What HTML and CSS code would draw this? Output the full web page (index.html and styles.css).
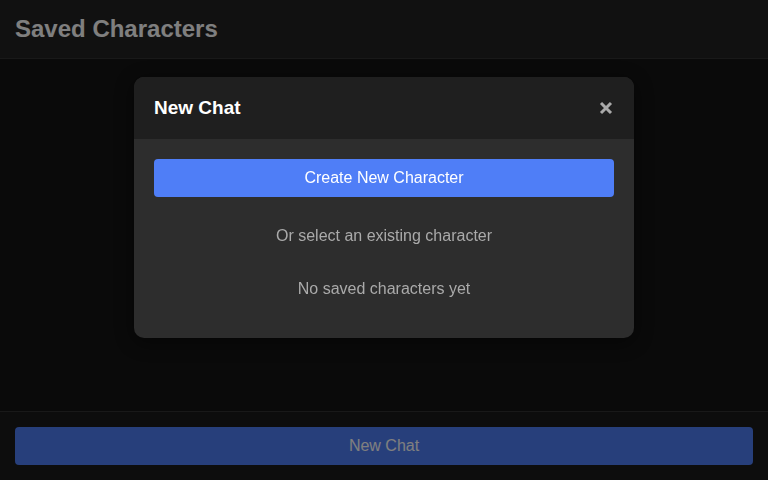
FILE: index.html
```html
<!DOCTYPE html>
<html>
<head>
<meta charset="utf-8">
<link rel="stylesheet" href="styles.css">
</head>
<body>
<div class="app">
  <header class="top">
    <h1 class="title">Saved Characters</h1>
  </header>
  <main class="main"></main>
  <footer class="bottom">
    <button class="btn-primary wide">New Chat</button>
  </footer>
</div>
<div class="overlay">
  <div class="modal">
    <div class="modal-head">
      <h2 class="modal-title">New Chat</h2>
      <svg class="close" width="14" height="14" viewBox="0 0 14 14"><path d="M2 2L12 12M12 2L2 12" stroke="#aaa" stroke-width="3" stroke-linecap="butt"/></svg>
    </div>
    <div class="modal-body">
      <button class="btn-primary">Create New Character</button>
      <p class="hint">Or select an existing character</p>
      <p class="empty">No saved characters yet</p>
    </div>
  </div>
</div>
</body>
</html>
```
FILE: styles.css
```css
* { box-sizing: border-box; }
html, body { margin: 0; height: 100%; }
body {
  font-family: "Liberation Sans", Arial, sans-serif;
  background: #141414;
  color: #fff;
}
.app {
  display: flex;
  flex-direction: column;
  height: 100vh;
}
.top {
  height: 59px;
  background: #222;
  border-bottom: 1px solid #333;
  display: flex;
  align-items: center;
  padding: 0 15px;
}
.title {
  margin: 0;
  font-size: 24px;
  font-weight: bold;
  color: #fff;
}
.main { flex: 1; }
.bottom {
  border-top: 1px solid #333;
  background: #1a1a1a;
  padding: 15px;
}
.btn-primary {
  display: block;
  width: 100%;
  height: 38px;
  border: none;
  border-radius: 4px;
  background: #4f7ef7;
  color: #fff;
  font-family: "Liberation Sans", Arial, sans-serif;
  font-size: 16px;
  cursor: pointer;
}
.overlay {
  position: fixed;
  inset: 0;
  background: rgba(0, 0, 0, 0.5);
  display: flex;
  justify-content: center;
  align-items: flex-start;
  padding-top: 77px;
}
.modal {
  width: 500px;
  border-radius: 10px;
  overflow: hidden;
  background: #2d2d2d;
  box-shadow: 0 4px 20px rgba(0, 0, 0, 0.5);
}
.modal-head {
  height: 62px;
  background: #1f1f1f;
  display: flex;
  align-items: center;
  justify-content: space-between;
  padding: 0 21px 0 20px;
}
.modal-title {
  margin: 0;
  font-size: 19px;
  font-weight: bold;
  color: #fff;
}
.close { display: block; }
.modal-body {
  padding: 20px 20px 40px;
  display: flex;
  flex-direction: column;
}
.hint, .empty {
  margin: 0;
  text-align: center;
  color: #aaa;
  font-size: 16px;
}
.hint { margin-top: 30px; }
.empty { margin-top: 35px; }
```
